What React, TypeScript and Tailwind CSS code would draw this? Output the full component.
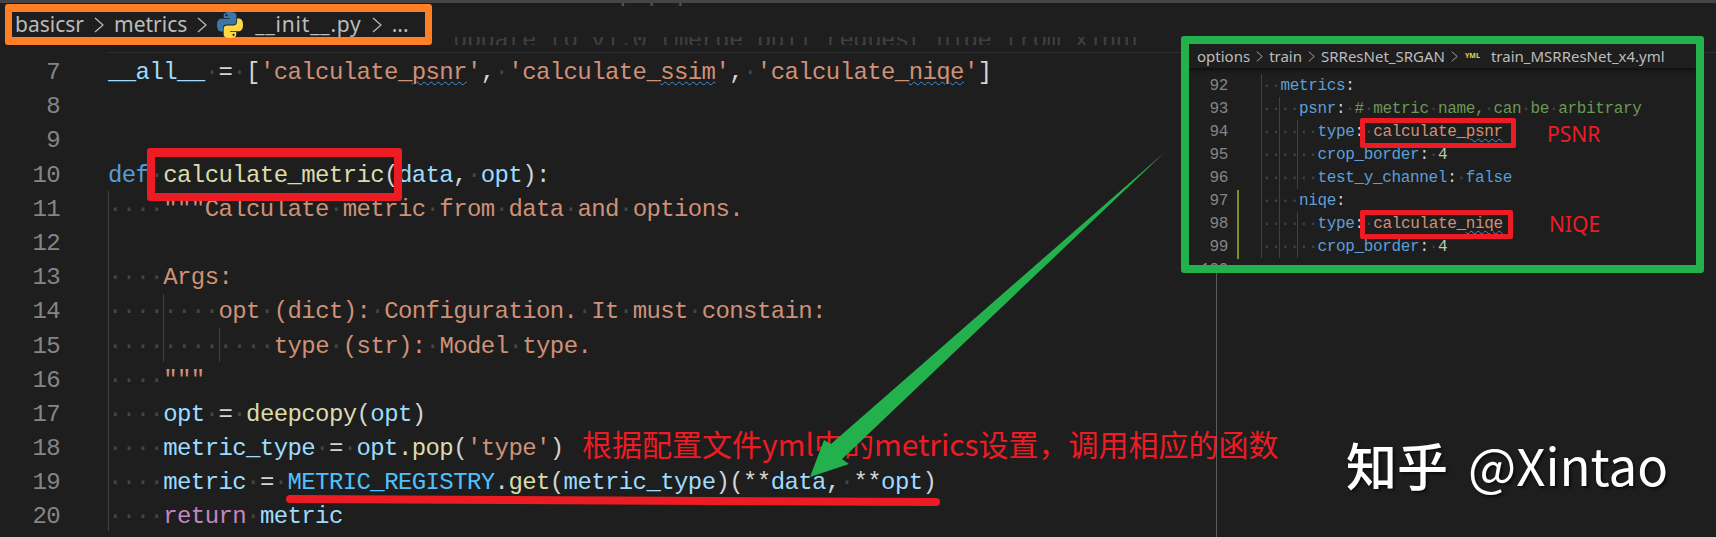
import React from "react";

type Tok = [string, string];

const S = "text-[#ce9178]";
const V = "text-[#9cdcfe]";
const P = "text-[#d4d4d4]";
const F = "text-[#dcdcaa]";
const K = "text-[#569cd6]";
const C = "text-[#4fc1ff]";
const R = "text-[#c586c0]";
const G = "text-[#6a9955]";
const N = "text-[#b5cea8]";
const Y = "text-[#5d9fd6]";
const W = "W";

function Code({ toks }: { toks: Tok[] }) {
  return (
    <>
      {toks.map(([t, c], i) => {
        if (c === W) {
          return (
            <span key={i} className="underline decoration-wavy decoration-[#3f8fd8] decoration-1 underline-offset-2 text-[#ce9178]">
              {t}
            </span>
          );
        }
        const parts = t.split(/( )/);
        return (
          <span key={i} className={c}>
            {parts.map((p, j) =>
              p === " " ? (
                <span key={j} className="text-[#454545]">
                  ·
                </span>
              ) : (
                <React.Fragment key={j}>{p}</React.Fragment>
              )
            )}
          </span>
        );
      })}
    </>
  );
}

const mainLines: [number, Tok[]][] = [
  [7, [["__all__", V], [" = ", P], ["[", P], ["'calculate_", S], ["psnr", W], ["'", S], [", ", P], ["'calculate_", S], ["ssim", W], ["'", S], [", ", P], ["'calculate_", S], ["niqe", W], ["'", S], ["]", P]]],
  [8, []],
  [9, []],
  [10, [["def", K], [" ", P], ["calculate_metric", F], ["(", P], ["data", V], [", ", P], ["opt", V], ["):", P]]],
  [11, [["    ", P], ['"""Calculate metric from data and options.', S]]],
  [12, []],
  [13, [["    ", P], ["Args:", S]]],
  [14, [["        ", P], ["opt (dict): Configuration. It must constain:", S]]],
  [15, [["            ", P], ["type (str): Model type.", S]]],
  [16, [["    ", P], ['"""', S]]],
  [17, [["    ", P], ["opt", V], [" = ", P], ["deepcopy", F], ["(", P], ["opt", V], [")", P]]],
  [18, [["    ", P], ["metric_type", V], [" = ", P], ["opt", V], [".", P], ["pop", F], ["(", P], ["'type'", S], [")", P]]],
  [19, [["    ", P], ["metric", V], [" = ", P], ["METRIC_REGISTRY", C], [".", P], ["get", F], ["(", P], ["metric_type", V], [")(", P], ["**", P], ["data", V], [", ", P], ["**", P], ["opt", V], [")", P]]],
  [20, [["    ", P], ["return", R], [" ", P], ["metric", V]]],
];

const insetLines: [number, Tok[], boolean][] = [
  [92, [["  ", P], ["metrics", Y], [":", P]], false],
  [93, [["    ", P], ["psnr", Y], [":", P], [" ", P], ["# metric name, can be arbitrary", G]], false],
  [94, [["      ", P], ["type", Y], [":", P], [" ", P], ["calculate_", S], ["psnr", W]], false],
  [95, [["      ", P], ["crop_border", Y], [":", P], [" ", P], ["4", N]], false],
  [96, [["      ", P], ["test_y_channel", Y], [":", P], [" ", P], ["false", K]], false],
  [97, [["    ", P], ["niqe", Y], [":", P]], true],
  [98, [["      ", P], ["type", Y], [":", P], [" ", P], ["calculate_", S], ["niqe", W]], true],
  [99, [["      ", P], ["crop_border", Y], [":", P], [" ", P], ["4", N]], true],
  [100, [], false],
];

function Chevron({ className }: { className: string }) {
  return (
    <svg viewBox="0 0 10 16" fill="none" stroke="currentColor" strokeWidth="1.2" className={className}>
      <path d="M1 1l8 7-8 7" />
    </svg>
  );
}

function PythonLogo() {
  return (
    <svg viewBox="2 2 28 28" className="w-[26px] h-[26px] shrink-0">
      <path
        fill="#3a76a8"
        d="M15.885 2.1c-7.1 0-6.651 3.07-6.651 3.07v3.19h6.752v1H6.545S2 8.8 2 16.005s4.013 6.912 4.013 6.912H8.4v-3.361s-.13-4.013 3.9-4.013h6.762s3.772.06 3.772-3.652V5.8s.572-3.712-6.842-3.712zm-3.732 2.137a1.214 1.214 0 1 1-1.21 1.21 1.213 1.213 0 0 1 1.21-1.21z"
      />
      <path
        fill="#ffd845"
        d="M16.085 29.91c7.1 0 6.651-3.08 6.651-3.08v-3.18h-6.751v-1h9.441S30 23.17 30 15.965s-4.013-6.912-4.013-6.912H23.6v3.361s.13 4.013-3.9 4.013h-6.762s-3.772-.06-3.772 3.652v6.131s-.572 3.7 6.842 3.7zm3.732-2.147a1.214 1.214 0 1 1 1.21-1.21 1.213 1.213 0 0 1-1.21 1.21z"
      />
    </svg>
  );
}

export default function App() {
  return (
    <div className="relative w-[1716px] h-[537px] overflow-hidden bg-[#1e1e1e]">
      {/* top strip */}
      <div className="h-[3px] bg-[#454545]" />

      {/* faint scrolled-away code behind the breadcrumb */}
      <div className="absolute left-[500px] top-[3px] h-[3px] overflow-hidden font-['Liberation_Mono',monospace] text-[24px] leading-[6px] text-[#555] whitespace-pre">
        {"'''     l l l"}
      </div>
      <div className="absolute left-[108px] right-0 top-[37px] h-[16px] overflow-hidden border-b border-[#303030]">
        <div className="w-[1032px] overflow-hidden font-['Liberation_Mono',monospace] text-[24px] tracking-[-0.6px] leading-[8px] text-[#404040] whitespace-pre">
          {"xintao, by merging ·     update to v1.0 (merge pull request niqe from xinntao"}
        </div>
      </div>

      {/* breadcrumb */}
      <div className="relative ml-[5px] mt-[1px] w-[427px] h-[41px] rounded-[3px] border-y-[8px] border-x-[7px] border-[#ff7f27] flex items-center gap-[10px] pl-[3px] font-['Noto_Sans',sans-serif] text-[21px] text-[#bcbcbc] whitespace-nowrap">
        <span>basicsr</span>
        <Chevron className="w-[10px] h-[16px] shrink-0" />
        <span>metrics</span>
        <Chevron className="w-[10px] h-[16px] shrink-0" />
        <PythonLogo />
        <span className="ml-[2px] tracking-[0.8px]">__init__.py</span>
        <Chevron className="w-[10px] h-[16px] shrink-0" />
        <span>...</span>
      </div>

      {/* main code */}
      <div className="mt-[11px] font-['Liberation_Mono',monospace] text-[24px] tracking-[-0.6px]">
        {mainLines.map(([n, toks]) => (
          <div key={n} className="flex h-[34.2px] leading-[34.2px] whitespace-pre">
            <div className="w-[60px] text-right text-[#858585]">{n}</div>
            <div className="ml-[48px]">
              <Code toks={toks} />
            </div>
          </div>
        ))}
      </div>

      {/* indent guides */}
      <div className="absolute left-[108px] top-[191px] w-px h-[340px] bg-[#404040]" />
      <div className="absolute left-[163px] top-[294px] w-px h-[68px] bg-[#404040]" />
      <div className="absolute left-[219px] top-[328px] w-px h-[34px] bg-[#404040]" />

      {/* column ruler */}
      <div className="absolute left-[1216px] top-[270px] bottom-0 w-px bg-[#5c5c5c]" />

      {/* red box around the function */}
      <div className="absolute left-[147px] top-[148px] w-[255px] h-[53px] rounded-[3px] border-x-[8px] border-t-[9px] border-b-[8px] border-[#ed1c24]" />

      {/* Chinese note */}
      <div className="absolute left-[582px] top-[421px] font-['Noto_Sans_CJK_SC',sans-serif] text-[30px] leading-[44px] text-[#ed1c24] whitespace-nowrap">
        {"根据配置文件yml中的metrics设置\uFF0C调用相应的函数"}
      </div>

      {/* inset */}
      <div className="absolute left-[1181px] top-[36px] w-[523px] h-[237px] rounded-[3px] border-[8px] border-[#22b14c] bg-[#1e1e1e] overflow-hidden">
        <div className="h-[24px] flex items-center gap-[6px] pl-[8px] font-['Noto_Sans',sans-serif] text-[15px] text-[#bcbcbc] whitespace-nowrap shadow-[0_2px_4px_rgba(0,0,0,0.6)]">
          <span>options</span>
          <Chevron className="w-[7px] h-[11px] shrink-0" />
          <span>train</span>
          <Chevron className="w-[7px] h-[11px] shrink-0" />
          <span>SRResNet_SRGAN</span>
          <Chevron className="w-[7px] h-[11px] shrink-0" />
          <span className="w-[18px] ml-[1px] mr-[2px] text-[7px] font-bold text-[#e8d44d] shrink-0">YML</span>
          <span>train_MSRResNet_x4.yml</span>
        </div>
        <div className="mt-[7px] font-['Liberation_Mono',monospace] text-[16px] tracking-[-0.35px]">
          {insetLines.map(([n, toks, changed]) => (
            <div key={n} className="flex h-[23px] leading-[23px] whitespace-pre">
              <div className="w-[39px] text-right text-[#858585]">{n}</div>
              <div className={changed ? "ml-[9px] w-[2px] bg-[#7f8f1f]" : "ml-[9px] w-[2px]"} />
              <div className="ml-[23px]">
                <Code toks={toks} />
              </div>
            </div>
          ))}
        </div>
      </div>

      {/* inset guides */}
      <div className="absolute left-[1261px] top-[74px] w-px h-[184px] bg-[#404040]" />
      <div className="absolute left-[1279px] top-[97px] w-px h-[161px] bg-[#404040]" />
      <div className="absolute left-[1297px] top-[120px] w-px h-[69px] bg-[#404040]" />
      <div className="absolute left-[1297px] top-[212px] w-px h-[46px] bg-[#404040]" />

      {/* inset red boxes and labels */}
      <div className="absolute left-[1360px] top-[118px] w-[156px] h-[30px] rounded-[2px] border-[5px] border-[#ed1c24]" />
      <div className="absolute left-[1360px] top-[210px] w-[153px] h-[29px] rounded-[2px] border-[5px] border-[#ed1c24]" />
      <div className="absolute left-[1547px] top-[119px] font-['Noto_Sans',sans-serif] text-[21px] leading-[30px] text-[#ed1c24]">PSNR</div>
      <div className="absolute left-[1549px] top-[209px] font-['Noto_Sans',sans-serif] text-[21px] leading-[30px] text-[#ed1c24]">NIQE</div>

      {/* arrow and underline */}
      <svg className="absolute left-0 top-0 w-[1716px] h-[537px] pointer-events-none" viewBox="0 0 1716 537">
        <path d="M290 499 L936 502" stroke="#ed1c24" strokeWidth="8" strokeLinecap="round" fill="none" />
        <path d="M1165 152 L831 444 L824 440 L810 477 L849 464 L842 459 Z" fill="#22b14c" />
      </svg>

      {/* watermark */}
      <div className="absolute left-[1346px] top-[429px] flex gap-[20px] font-['Noto_Sans_CJK_SC',sans-serif] text-[51px] leading-[70px] text-white whitespace-pre [text-shadow:2px_2px_3px_rgba(0,0,0,0.6)]">
        <span className="font-medium">知乎</span>
        <span>@Xintao</span>
      </div>
    </div>
  );
}
